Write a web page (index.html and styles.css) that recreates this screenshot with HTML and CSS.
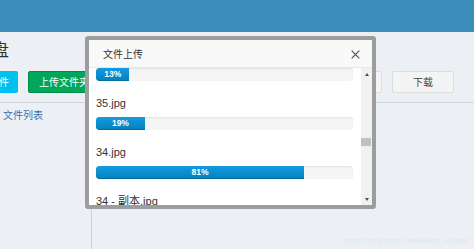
FILE: index.html
```html
<!DOCTYPE html>
<html lang="zh">
<head>
<meta charset="utf-8">
<title>网盘</title>
<link rel="stylesheet" href="styles.css">
</head>
<body>
<header class="topbar"></header>
<main class="page">
  <h1 class="page-title">网盘</h1>
  <div class="toolbar">
    <div class="btn-group">
      <span class="btn btn-info btn-cut">上传文件</span>
      <span class="btn btn-success">上传文件夹</span>
    </div>
    <div class="btn-group">
      <span class="btn btn-default">删除</span>
      <span class="btn btn-default">下载</span>
    </div>
  </div>
  <div class="tabbar"><span class="tab">文件列表</span></div>
  <div class="workspace">
    <aside class="sidebar"></aside>
    <section class="files">
      <div class="watermark">https://blog.csdn.net/weixin_upload</div>
    </section>
  </div>
</main>

<div class="modal">
  <div class="modal-head">
    <span class="modal-title">文件上传</span>
    <svg class="close" width="9" height="9" viewBox="0 0 9 9"><path d="M0.7 0.7 L8.3 8.3 M8.3 0.7 L0.7 8.3" stroke="#555" stroke-width="1.2" fill="none"/></svg>
  </div>
  <div class="modal-body">
    <div class="upload-list">
      <div class="item">
        <div class="progress"><div class="bar" style="width:13%">13%</div></div>
      </div>
      <div class="item">
        <div class="fname">35.jpg</div>
        <div class="progress"><div class="bar" style="width:19%">19%</div></div>
      </div>
      <div class="item">
        <div class="fname">34.jpg</div>
        <div class="progress"><div class="bar" style="width:81%">81%</div></div>
      </div>
      <div class="item">
        <div class="fname">34 - 副本.jpg</div>
        <div class="progress"><div class="bar" style="width:5%">5%</div></div>
      </div>
    </div>
    <div class="scrollbar">
      <div class="sb-btn"><span class="tri-up"></span></div>
      <div class="sb-track"><div class="sb-thumb"></div></div>
      <div class="sb-btn"><span class="tri-down"></span></div>
    </div>
  </div>
</div>
</body>
</html>
```

FILE: styles.css
```css
* { box-sizing: border-box; }
html, body { margin: 0; padding: 0; }
body {
  width: 474px;
  height: 249px;
  overflow: hidden;
  background: #ecf0f5;
  font-family: "Liberation Sans", "Noto Sans CJK SC", sans-serif;
  color: #333;
  position: relative;
}
.topbar {
  height: 32px;
  background: #3c8dbc;
}
.page {
  display: flex;
  flex-direction: column;
  height: 217px;
}
.page-title {
  margin: 6px 0 0 -25px;
  font-size: 17px;
  line-height: 22px;
  font-weight: normal;
  color: #333;
  font-family: "Noto Sans CJK SC", sans-serif;
}
.toolbar {
  margin-top: 11px;
  display: flex;
  justify-content: space-between;
  padding-right: 20px;
}
.btn-group { display: flex; gap: 10px; }
.btn {
  height: 22px;
  line-height: 20px;
  font-size: 10px;
  font-family: "Noto Sans CJK SC", sans-serif;
  padding: 0 10px;
  border: 1px solid transparent;
  border-radius: 2px;
  white-space: nowrap;
  text-align: center;
}
.btn-cut { margin-left: -40px; padding: 0 8px; }
.btn-info { background: #00c0ef; color: #fff; }
.btn-success { background: #00a65a; border-color: #008d4c; color: #fff; }
.btn-default { background: #f4f4f4; border-color: #ddd; color: #444; width: 62px; }
.tabbar {
  margin-top: 9px;
  border-top: 1px solid #d2d6de;
  height: 23px;
  display: flex;
  align-items: center;
}
.tab {
  margin-left: 3px;
  font-size: 10px;
  color: #3c6fa8;
  font-family: "Noto Sans CJK SC", sans-serif;
}
.workspace {
  flex: 1;
  display: flex;
}
.sidebar {
  width: 92px;
  border-right: 1px solid #cdd1d8;
}
.files {
  flex: 1;
  display: flex;
  flex-direction: column;
  justify-content: flex-end;
  align-items: flex-end;
  padding: 0 6px 4px 0;
}
.watermark {
  font-size: 8px;
  color: #e2e6ec;
}

/* modal */
.modal {
  position: absolute;
  left: 85px;
  top: 36px;
  width: 291px;
  height: 173px;
  border: 4px solid #9d9d9d;
  border-radius: 3px;
  background: #fff;
  display: flex;
  flex-direction: column;
  overflow: hidden;
}
.modal-head {
  height: 28px;
  flex: none;
  background: #f9f9f9;
  border-bottom: 1px solid #e8e8e8;
  display: flex;
  align-items: center;
  justify-content: space-between;
  padding: 0 12px 0 14px;
}
.modal-title {
  font-size: 10px;
  color: #333;
  font-family: "Noto Sans CJK SC", sans-serif;
}
.close { display: block; margin-top: 1px; }
.modal-body {
  flex: 1;
  display: flex;
  min-height: 0;
}
.upload-list {
  flex: 1;
  overflow: hidden;
  padding: 0 8px 0 7px;
}
.item { margin-bottom: 15px; }
.fname {
  height: 14px;
  line-height: 14px;
  font-size: 11px;
  color: #333;
  margin-bottom: 7px;
  white-space: nowrap;
}
.progress {
  height: 13px;
  background: #f5f5f5;
  border-radius: 3px;
  box-shadow: inset 0 1px 2px rgba(0,0,0,0.08);
  overflow: hidden;
}
.bar {
  height: 100%;
  background: linear-gradient(to bottom, #149bdf, #0480be);
  color: #fff;
  font-size: 8.5px;
  font-weight: bold;
  line-height: 13px;
  text-align: center;
  border-radius: 3px 0 0 3px;
  box-shadow: inset 0 -1px 0 rgba(0,0,0,0.15);
}
.scrollbar {
  width: 11px;
  flex: none;
  background: #f1f1f1;
  display: flex;
  flex-direction: column;
}
.sb-btn {
  height: 12px;
  display: flex;
  align-items: center;
  justify-content: center;
}
.tri-up, .tri-down {
  width: 0; height: 0;
  border-left: 2.5px solid transparent;
  border-right: 2.5px solid transparent;
}
.tri-up { border-bottom: 3px solid #505050; }
.tri-down { border-top: 3px solid #505050; }
.sb-track {
  flex: 1;
  padding-top: 58px;
}
.sb-thumb {
  height: 8px;
  margin: 0 1px 0 0;
  background: #c1c1c1;
}
```
